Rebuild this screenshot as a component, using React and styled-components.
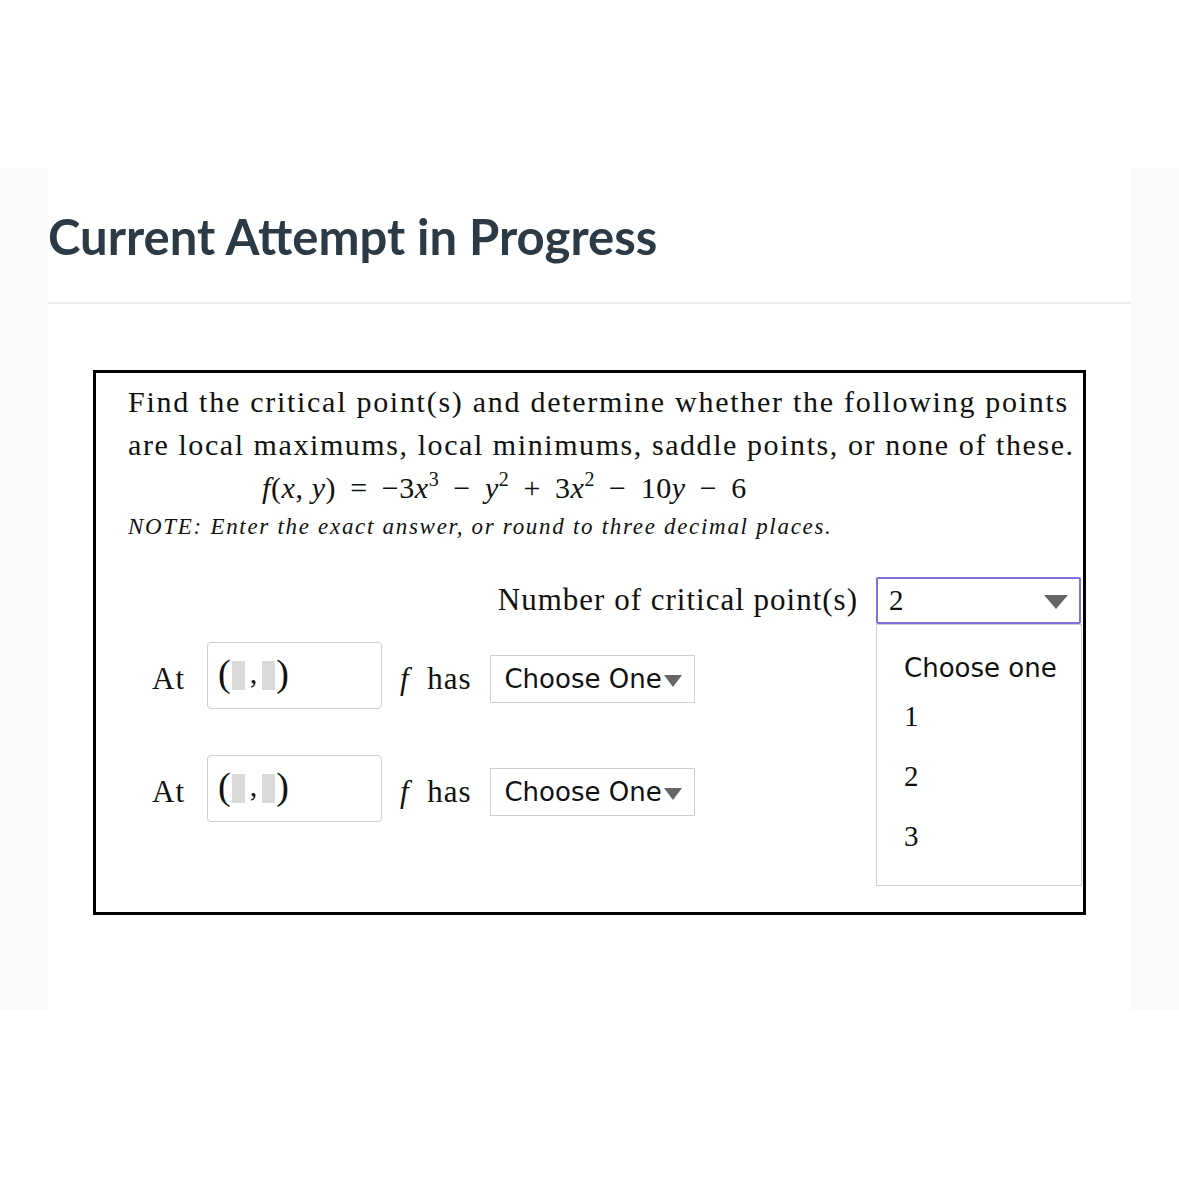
import React from "react";
import styled, { createGlobalStyle } from "styled-components";

const GlobalStyle = createGlobalStyle`
  html, body {
    margin: 0;
    padding: 0;
    background: #ffffff;
  }
`;

const serif = `"Liberation Serif", "Times New Roman", serif`;
const sans = `"DejaVu Sans", "Noto Sans", sans-serif`;

const App = () => {
  return (
    <>
      <GlobalStyle />
      <Page>
        <Band>
          <Panel>
            <Title>Current Attempt in Progress</Title>
            <Divider />
            <QuestionBox>
              <Prompt>
                <Line spacing="1.72px">
                  Find the critical point(s) and determine whether the following
                  points
                </Line>
                <Line spacing="1.57px">
                  are local maximums, local minimums, saddle points, or none of
                  these.
                </Line>
                <Formula>
                  <i>f</i>(<i>x</i>,&nbsp;<i>y</i>)<Op>=</Op>−3<i>x</i>
                  <sup>3</sup>
                  <Op>−</Op>
                  <i>y</i>
                  <sup>2</sup>
                  <Op>+</Op>3<i>x</i>
                  <sup>2</sup>
                  <Op>−</Op>10<i>y</i>
                  <Op>−</Op>6
                </Formula>
              </Prompt>
              <Note>
                NOTE: Enter the exact answer, or round to three decimal places.
              </Note>

              <CountRow>
                <Label>Number of critical point(s)</Label>
                <CountSelect>
                  <span>2</span>
                  <Caret size="big" />
                  <Menu>
                    <MenuItem sans>Choose one</MenuItem>
                    <MenuItem>1</MenuItem>
                    <MenuItem>2</MenuItem>
                    <MenuItem>3</MenuItem>
                  </Menu>
                </CountSelect>
              </CountRow>

              {[0, 1].map((i) => (
                <PointRow key={i} first={i === 0}>
                  <Label low>At</Label>
                  <PointInput>
                    <Paren>(</Paren>
                    <Blank />
                    <Comma>,</Comma>
                    <Blank />
                    <Paren>)</Paren>
                  </PointInput>
                  <Label low>
                    <i>f</i>&nbsp; has
                  </Label>
                  <TypeSelect>
                    Choose One
                    <Caret />
                  </TypeSelect>
                </PointRow>
              ))}
            </QuestionBox>
          </Panel>
        </Band>
      </Page>
    </>
  );
};

export default App;

const Page = styled.div`
  width: 1179px;
  height: 1179px;
  padding-top: 168px;
  box-sizing: border-box;
  background: #ffffff;
`;

const Band = styled.div`
  height: 842px;
  background: #fafafa;
  padding: 0 48px;
`;

const Panel = styled.div`
  height: 100%;
  background: #ffffff;
`;

const Title = styled.h1`
  margin: 0;
  padding: 39px 0 36px;
  font-family: Lato, "Open Sans", sans-serif;
  font-weight: 700;
  font-size: 49px;
  line-height: 1.2;
  color: #2b3a44;
`;

const Divider = styled.div`
  height: 2px;
  background: #ececec;
`;

const QuestionBox = styled.div`
  margin: 66px 0 0 45px;
  width: 993px;
  height: 545px;
  box-sizing: border-box;
  border: 3px solid #000;
  padding: 7px 2px 0 32px;
  font-family: ${serif};
  color: #111;
`;

const Prompt = styled.div`
  font-size: 30px;
  line-height: 43px;
`;

const Line = styled.div`
  white-space: nowrap;
  letter-spacing: ${({ spacing }) => spacing};
`;

const Formula = styled.div`
  margin-left: 134px;
  white-space: nowrap;
  letter-spacing: 0.6px;
  sup {
    font-size: 20px;
    line-height: 0;
    vertical-align: 12px;
  }
`;

const Op = styled.span`
  margin: 0 14px;
`;

const Note = styled.div`
  margin-top: 3px;
  font-size: 23px;
  line-height: 30px;
  font-style: italic;
  letter-spacing: 1.7px;
  white-space: nowrap;
`;

const CountRow = styled.div`
  margin-top: 35px;
  display: flex;
  justify-content: flex-end;
  align-items: center;
  gap: 18px;
`;

const Label = styled.span`
  font-size: 31px;
  letter-spacing: 1px;
  white-space: nowrap;
  padding-top: ${({ low }) => (low ? "8px" : "0")};
`;

const CountSelect = styled.div`
  position: relative;
  width: 205px;
  height: 47px;
  box-sizing: border-box;
  border: 2px solid #7d72d8;
  border-radius: 2px;
  display: flex;
  align-items: center;
  justify-content: space-between;
  padding: 0 11px 0 11px;
  font-size: 29px;
`;

const Caret = styled.span`
  width: 0;
  height: 0;
  border-left: ${({ size }) => (size === "big" ? "12px" : "9px")} solid
    transparent;
  border-right: ${({ size }) => (size === "big" ? "12px" : "9px")} solid
    transparent;
  border-top: ${({ size }) => (size === "big" ? "14px" : "12px")} solid #666;
  margin-top: 4px;
`;

const Menu = styled.div`
  position: absolute;
  top: 45px;
  left: -2px;
  width: 206px;
  height: 262px;
  box-sizing: border-box;
  border: 1px solid #cfcfcf;
  background: #fff;
  padding: 18px 0 0 27px;
  z-index: 2;
`;

const MenuItem = styled.div`
  font-family: ${({ sans }) => (sans ? `"DejaVu Sans", sans-serif` : serif)};
  font-size: ${({ sans }) => (sans ? "26px" : "29px")};
  height: ${({ sans }) => (sans ? "48px" : "60px")};
  line-height: 50px;
  color: #111;
`;

const PointRow = styled.div`
  margin-top: ${({ first }) => (first ? "18px" : "46px")};
  margin-left: 24px;
  display: flex;
  align-items: center;
`;

const PointInput = styled.div`
  margin: 0 18px 0 22px;
  width: 175px;
  height: 67px;
  box-sizing: border-box;
  border: 1px solid #cfcfcf;
  border-radius: 4px;
  display: flex;
  align-items: center;
  padding-left: 10px;
  padding-bottom: 4px;
`;

const Paren = styled.span`
  font-size: 38px;
  line-height: 1;
`;

const Blank = styled.span`
  display: inline-block;
  width: 13px;
  height: 29px;
  background: #d9d9d9;
  margin: 4px 1px 0;
`;

const Comma = styled.span`
  font-size: 30px;
  margin: 0 4px;
`;

const TypeSelect = styled.div`
  margin: 7px 0 0 19px;
  width: 205px;
  height: 48px;
  box-sizing: border-box;
  border: 1px solid #cfcfcf;
  display: flex;
  align-items: center;
  padding-left: 13px;
  font-family: ${sans};
  font-size: 26px;
  color: #111;
  gap: 2px;
`;
